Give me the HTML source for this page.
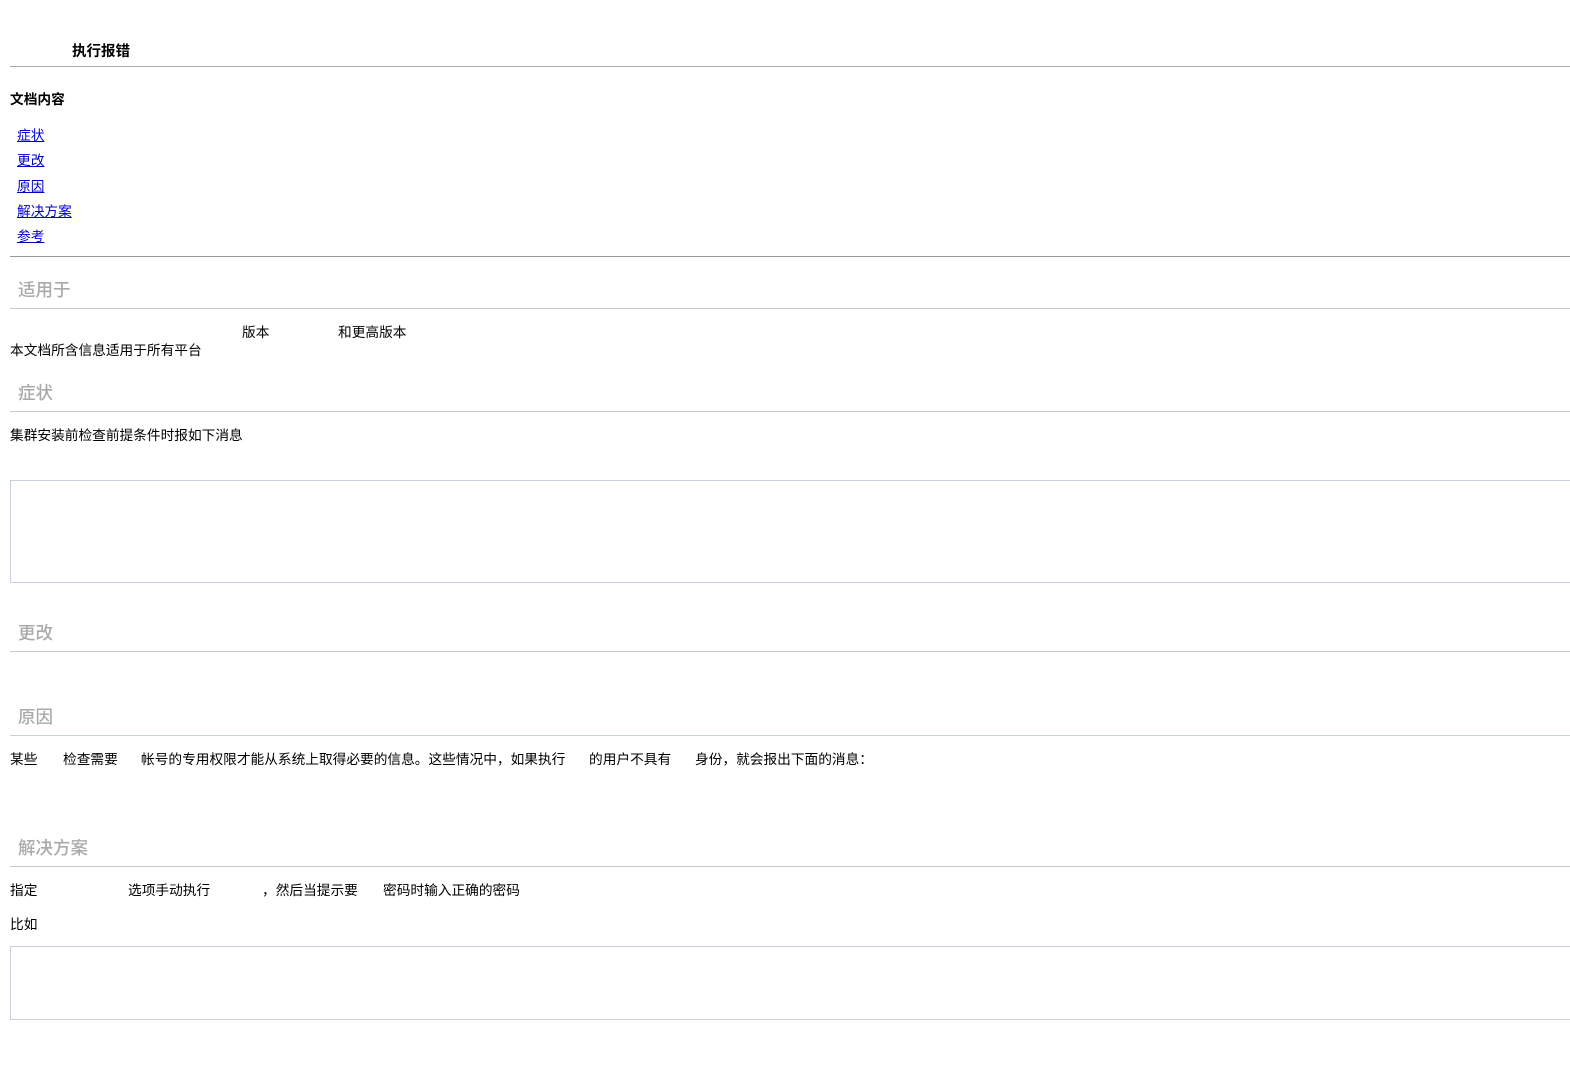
<!DOCTYPE html>
<html><head><meta charset="utf-8"><style>
body{margin:0;width:1570px;height:1078px;background:#fff;position:relative;overflow:hidden;font-family:"Liberation Sans","Noto Sans CJK SC",sans-serif;font-size:13.7px;color:#000}
.t{position:absolute;line-height:16px;white-space:nowrap}
.h{position:absolute;left:18px;font-size:17.5px;color:#aaa;line-height:20px;white-space:nowrap;font-weight:500}
.l{position:absolute;left:10px;right:0;height:1px;background:#c8c8c8}
a{color:#00c;text-decoration:underline}
.box{position:absolute;left:10px;right:-2px;border:1px solid #c8d0e0}
</style></head><body>
<div class="t" style="left:72px;top:44px;font-weight:bold;font-size:14.5px">执行报错</div>
<div class="l" style="top:66px;background:#aaa"></div>
<div class="t" style="left:10px;top:92px;font-weight:bold">文档内容</div>
<div class="t" style="left:17px;top:128px"><a>症状</a></div>
<div class="t" style="left:17px;top:153px"><a>更改</a></div>
<div class="t" style="left:17px;top:179px"><a>原因</a></div>
<div class="t" style="left:17px;top:204px"><a>解决方案</a></div>
<div class="t" style="left:17px;top:229px"><a>参考</a></div>
<div class="l" style="top:256px;background:#999"></div>
<div class="h" style="top:280px">适用于</div>
<div class="l" style="top:308px"></div>
<div class="t" style="left:242px;top:325px">版本</div>
<div class="t" style="left:338px;top:325px">和更高版本</div>
<div class="t" style="left:10px;top:343px">本文档所含信息适用于所有平台</div>
<div class="h" style="top:383px">症状</div>
<div class="l" style="top:411px"></div>
<div class="t" style="left:10px;top:428px">集群安装前检查前提条件时报如下消息</div>
<div class="box" style="top:480px;height:101px"></div>
<div class="h" style="top:623px">更改</div>
<div class="l" style="top:651px"></div>
<div class="h" style="top:707px">原因</div>
<div class="l" style="top:735px;background:#c8d0e0"></div>
<div class="t" style="left:10px;top:752px">某些</div>
<div class="t" style="left:63px;top:752px">检查需要</div>
<div class="t" style="left:141px;top:752px">帐号的专用权限才能从系统上取得必要的信息。这些情况中，如果执行</div>
<div class="t" style="left:589px;top:752px">的用户不具有</div>
<div class="t" style="left:695px;top:752px">身份，就会报出下面的消息：</div>
<div class="h" style="top:838px">解决方案</div>
<div class="l" style="top:866px"></div>
<div class="t" style="left:10px;top:883px">指定</div>
<div class="t" style="left:128px;top:883px">选项手动执行</div>
<div class="t" style="left:262px;top:883px">，然后当提示要</div>
<div class="t" style="left:383px;top:883px">密码时输入正确的密码</div>
<div class="t" style="left:10px;top:917px">比如</div>
<div class="box" style="top:946px;height:72px"></div>
</body></html>
